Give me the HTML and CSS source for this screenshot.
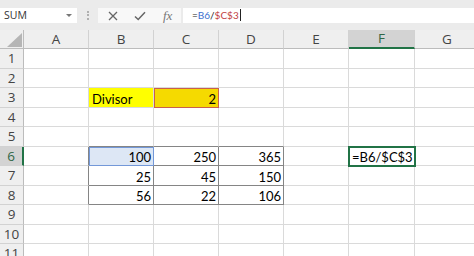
FILE: index.html
```html
<!DOCTYPE html>
<html lang="en">
<head>
  <meta charset="UTF-8" />
  <title>Divisor - Excel</title>
  <link rel="stylesheet" href="styles.css">
</head>
<body>
  <!-- Formula bar -->
  <div class="formula-bar">
    <div class="name-box">SUM <span class="drop"></span></div>
    <div class="grip"></div>
    <div class="fx-buttons">
      <svg class="icon" width="10" height="10" viewBox="0 0 10 10"><path d="M1 1L9 9M9 1L1 9" stroke="#666" stroke-width="1.3" fill="none"/></svg>
      <svg class="icon" width="12" height="10" viewBox="0 0 12 10"><path d="M1 5.5L4.2 8.5L11 1.2" stroke="#666" stroke-width="1.5" fill="none"/></svg>
      <span class="fx">fx</span>
    </div>
    <div class="formula-input">=<span class="ref-b">B6</span>/<span class="ref-c">$C$3</span><span class="cursor"></span></div>
  </div>

  <!-- Grid -->
  <table class="sheet">
    <colgroup>
      <col class="c-head">
      <col class="c-std" span="5">
      <col class="c-f">
      <col class="c-std">
    </colgroup>
    <thead>
      <tr>
        <th class="corner"><svg width="18" height="16" viewBox="0 0 18 16"><polygon points="17,1 17,15 2,15" fill="#b5b5b5"/></svg></th>
        <th class="col">A</th>
        <th class="col">B</th>
        <th class="col">C</th>
        <th class="col">D</th>
        <th class="col">E</th>
        <th class="col sel">F</th>
        <th class="col">G</th>
      </tr>
    </thead>
    <tbody>
      <tr><th class="row">1</th><td></td><td></td><td></td><td></td><td></td><td></td><td></td></tr>
      <tr><th class="row">2</th><td></td><td></td><td></td><td></td><td></td><td></td><td></td></tr>
      <tr><th class="row">3</th><td></td><td class="yellow">Divisor</td><td class="num yellow ref-red">2</td><td></td><td></td><td></td><td></td></tr>
      <tr><th class="row">4</th><td></td><td></td><td></td><td></td><td></td><td></td><td></td></tr>
      <tr><th class="row">5</th><td></td><td class="edge-b"></td><td class="edge-b"></td><td class="edge-b"></td><td></td><td></td><td></td></tr>
      <tr><th class="row sel">6</th><td class="edge-r"></td><td class="num box ref-blue">100</td><td class="num box">250</td><td class="num box">365</td><td></td><td class="active">=B6/$C$3</td><td></td></tr>
      <tr><th class="row">7</th><td class="edge-r"></td><td class="num box">25</td><td class="num box">45</td><td class="num box">150</td><td></td><td></td><td></td></tr>
      <tr><th class="row">8</th><td class="edge-r"></td><td class="num box">56</td><td class="num box">22</td><td class="num box">106</td><td></td><td></td><td></td></tr>
      <tr><th class="row">9</th><td></td><td></td><td></td><td></td><td></td><td></td><td></td></tr>
      <tr><th class="row">10</th><td></td><td></td><td></td><td></td><td></td><td></td><td></td></tr>
      <tr><th class="row">11</th><td></td><td></td><td></td><td></td><td></td><td></td><td></td></tr>
    </tbody>
  </table>
</body>
</html>
```

FILE: styles.css
```css
* { margin: 0; padding: 0; box-sizing: border-box; }
html, body {
  width: 100%;
  height: 100%;
  background: #fff;
  overflow: hidden;
  font-family: "Lato", "Liberation Sans", sans-serif;
}

/* formula bar */
.formula-bar {
  display: flex;
  align-items: flex-start;
  height: 30px;
  padding-top: 8px;
  background: #ebebeb;
}
.name-box {
  position: relative;
  width: 77px;
  height: 15px;
  background: #fff;
  padding-left: 4px;
  font: 10.5px/15px "Open Sans", sans-serif;
  color: #333;
}
.drop {
  position: absolute;
  right: 5px;
  top: 6px;
  border-left: 3px solid transparent;
  border-right: 3px solid transparent;
  border-top: 3px solid #777;
}
.grip {
  width: 2px;
  height: 9px;
  margin: 3px 9px 0 10px;
  border-left: 2px dotted #b0b0b0;
}
.fx-buttons {
  display: flex;
  align-items: center;
  width: 83px;
  height: 15px;
  background: #f8f8f8;
  padding-left: 10px;
  gap: 16px;
}
.fx {
  font: italic 13px/15px "Liberation Serif", serif;
  color: #777;
  margin-left: 1px;
}
.formula-input {
  flex: 1;
  height: 15px;
  margin-left: 2px;
  background: #fff;
  padding-left: 9px;
  font-size: 10px;
  line-height: 15px;
  color: #222;
}
.ref-b { color: #3a6fcf; }
.ref-c { color: #c2413f; }
.cursor {
  display: inline-block;
  width: 1px;
  height: 12px;
  margin-left: 1px;
  background: #222;
  vertical-align: -2px;
}

/* sheet */
.sheet {
  border-collapse: separate;
  border-spacing: 0;
  table-layout: fixed;
  width: 480px;
}
.c-head { width: 24px; }
.c-std { width: 65px; }
.c-f { width: 66px; }
thead tr { height: 19px; }
tbody tr { height: 19.5px; }

th {
  background: #efefef;
  font-family: "Open Sans", sans-serif;
  font-weight: normal;
  font-size: 13.5px;
  color: #444;
  border-right: 1px solid #d2d2d2;
  border-bottom: 1px solid #d2d2d2;
  text-align: center;
  vertical-align: middle;
  line-height: 15px;
}
th.col { border-bottom-color: #bcbcbc; }
th.row { border-right-color: #bcbcbc; font-size: 13.5px; padding-top: 1px; }
th.corner {
  text-align: right;
  vertical-align: bottom;
  border-right-color: #bcbcbc;
  border-bottom-color: #bcbcbc;
}
th.corner svg { display: block; margin-left: auto; }
th.sel { background: #d3d3d3; color: #2f6646; }
th.col.sel { border-bottom: 2px solid #217346; }
th.row.sel { border-right: 2px solid #217346; }

td {
  border-right: 1px solid #dadada;
  border-bottom: 1px solid #dadada;
  font-size: 13px;
  line-height: 16px;
  padding: 0 2px 0 3px;
  vertical-align: bottom;
  white-space: nowrap;
  color: #000;
}
.num { text-align: right; }
.yellow { background: #ffff00; }
.ref-red {
  background: #f5da00;
  outline: 1px solid #c8604c;
  outline-offset: -1px;
}
.box { border-right-color: #858585; border-bottom-color: #858585; }
.edge-r { border-right-color: #858585; }
.edge-b { border-bottom-color: #858585; }
.ref-blue {
  background: #dde7f5;
  outline: 1px solid #7398d8;
  outline-offset: -1px;
}
.active {
  outline: 2px solid #217346;
  outline-offset: -1px;
  padding-left: 3px;
}
```
